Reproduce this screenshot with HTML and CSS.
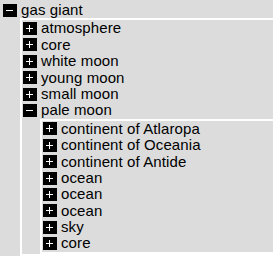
FILE: index.html
```html
<!DOCTYPE html>
<html lang="en">
<head>
  <meta charset="UTF-8">
  <title>Tree</title>
  <link rel="stylesheet" href="styles.css">
</head>
<body>
  <ul class="tree">
    <li>
      <div class="node"><span class="toggle open"></span><span class="label">gas giant</span></div>
      <ul class="tree sub">
        <li><div class="node"><span class="toggle"></span><span class="label">atmosphere</span></div></li>
        <li><div class="node"><span class="toggle"></span><span class="label">core</span></div></li>
        <li><div class="node"><span class="toggle"></span><span class="label">white moon</span></div></li>
        <li><div class="node"><span class="toggle"></span><span class="label">young moon</span></div></li>
        <li><div class="node"><span class="toggle"></span><span class="label">small moon</span></div></li>
        <li>
          <div class="node"><span class="toggle open"></span><span class="label">pale moon</span></div>
          <ul class="tree sub">
            <li><div class="node"><span class="toggle"></span><span class="label">continent of Atlaropa</span></div></li>
            <li><div class="node"><span class="toggle"></span><span class="label">continent of Oceania</span></div></li>
            <li><div class="node"><span class="toggle"></span><span class="label">continent of Antide</span></div></li>
            <li><div class="node"><span class="toggle"></span><span class="label">ocean</span></div></li>
            <li><div class="node"><span class="toggle"></span><span class="label">ocean</span></div></li>
            <li><div class="node"><span class="toggle"></span><span class="label">ocean</span></div></li>
            <li><div class="node"><span class="toggle"></span><span class="label">sky</span></div></li>
            <li><div class="node"><span class="toggle"></span><span class="label">core</span></div></li>
          </ul>
        </li>
      </ul>
    </li>
  </ul>
</body>
</html>
```
FILE: styles.css
```css
* { box-sizing: border-box; }
body { margin: 0; padding: 2px 0 0 3px; background: #dcdcdc; color: #000; font: 15px/16.4px "Liberation Sans", Arial, sans-serif; overflow: hidden; }
.tree { list-style: none; margin: 0; padding: 0; }
.sub { margin-left: 17px; padding-left: 1px; border-top: 2px solid #fff; border-left: 2px solid #fff; border-bottom: 2px solid #fff; }
.node { display: flex; align-items: center; height: 16.4px; white-space: nowrap; }
.toggle { position: relative; flex: none; width: 14px; height: 13px; margin-right: 4px; background: #000; }
.toggle::before { content: ""; position: absolute; left: 3px; top: 6px; width: 7px; height: 1px; background: #fff; }
.toggle::after { content: ""; position: absolute; left: 6px; top: 3px; width: 1px; height: 7px; background: #fff; }
.toggle.open::after { display: none; }
.label { letter-spacing: 0.1px; }
```
